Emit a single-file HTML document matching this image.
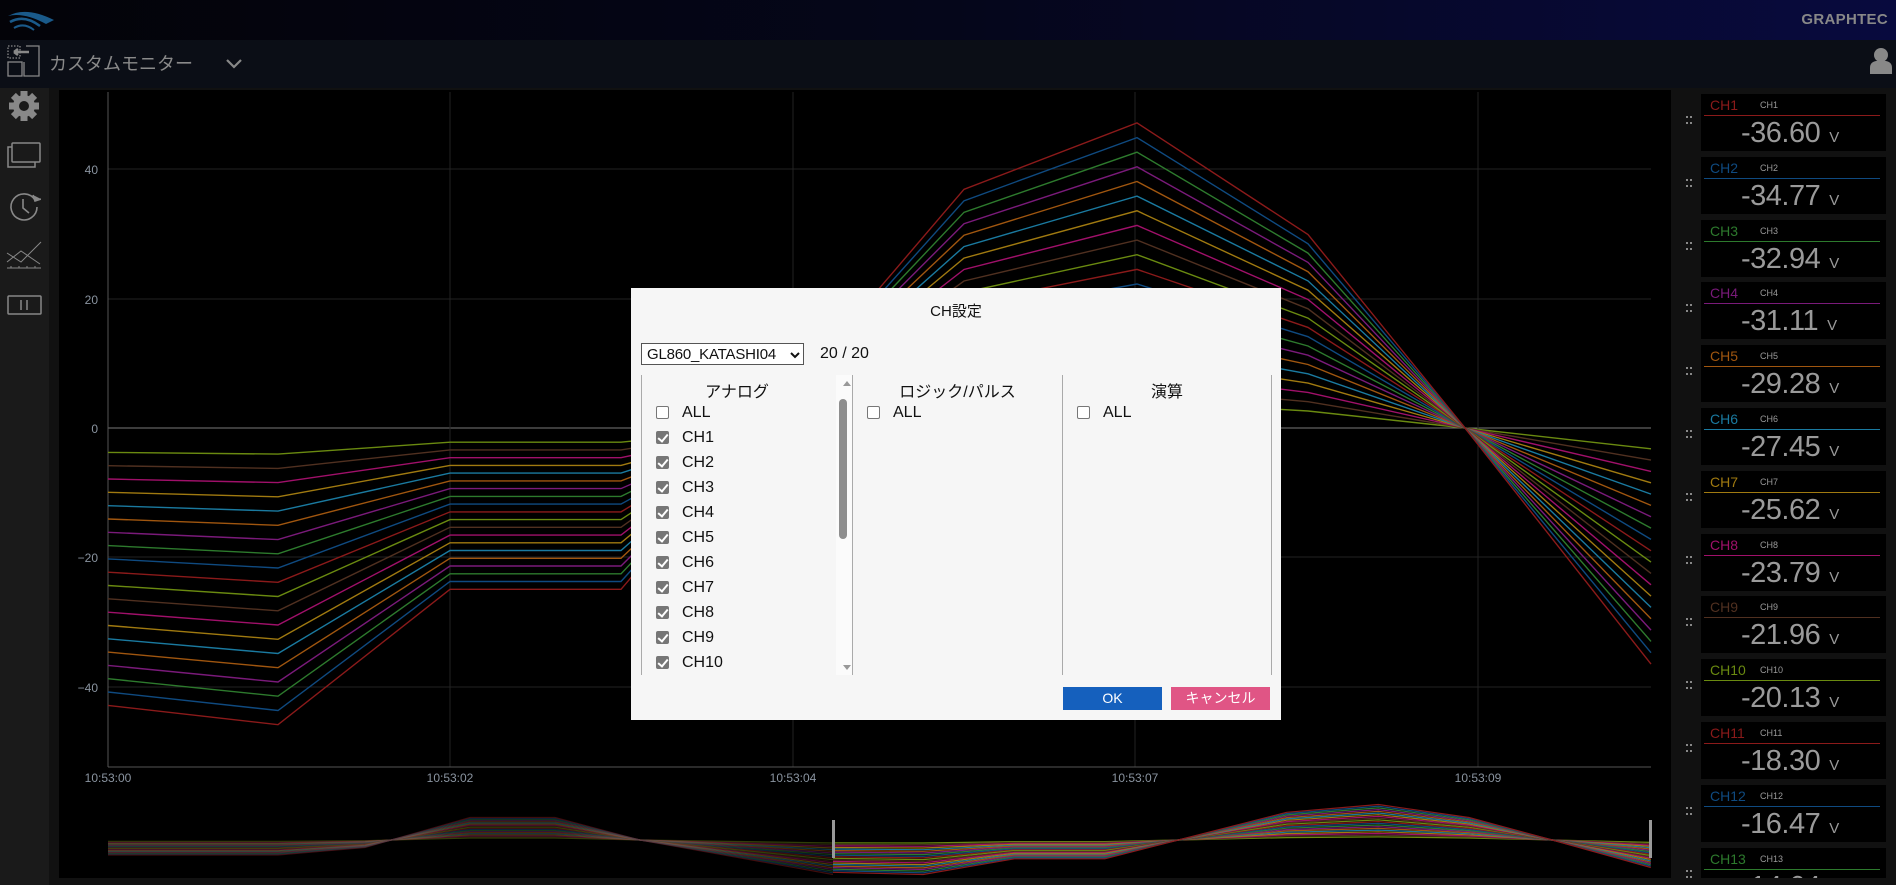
<!DOCTYPE html>
<html style="overflow:hidden;width:1896px;height:885px"><head><meta charset="utf-8"><style>
*{margin:0;padding:0;box-sizing:border-box}
body{width:1896px;height:885px;overflow:hidden;background:#111;font-family:"Liberation Sans","Noto Sans CJK JP",sans-serif;position:relative}
.top{position:absolute;left:0;top:0;width:1896px;height:40px;background:linear-gradient(90deg,#030308 0%,#05061a 50%,#080a3e 100%)}
.bar2{position:absolute;left:0;top:40px;width:1896px;height:48px;background:#0b0e16}
.side{position:absolute;left:0;top:88px;width:49px;height:797px;background:#1a1a1a}
.chart{position:absolute;left:59px;top:90px;width:1612px;height:788px;background:#000}
.rp{position:absolute;left:1671px;top:88px;width:225px;height:797px;background:#111}
#cards{position:absolute;left:0;top:0;width:1896px;height:878px;overflow:hidden}
.card{position:absolute;left:1701px;width:185px;height:57px;background:#000}
.card .n{position:absolute;left:9px;top:3px;font-size:14px}
.card .s{position:absolute;left:59px;top:6px;font-size:9px;color:#999}
.card .u{position:absolute;left:3px;right:6px;top:21px;height:1px}
.card .v{position:absolute;left:40px;top:23px;font-size:29px;color:#9a9a9a;letter-spacing:-0.5px}
.card .v small{font-size:15px;margin-left:9px}
.dots{position:absolute;left:1686px;width:6px;height:8px;border-top:2px dotted #888;border-bottom:2px dotted #888}
.dlg{position:absolute;left:631px;top:288px;width:650px;height:432px;background:#f6f6f6;color:#111}
.dlg .t{position:absolute;top:12px;width:100%;text-align:center;font-size:15px}
.sel{position:absolute;left:10px;top:55px;width:163px;height:22px;border:1px solid #555;background:#fff;font-size:15px;padding:2px 0 0 5px;letter-spacing:-0.2px}
.col{position:absolute;top:87px;height:300px;border-left:1px solid #aaa}
.hdr{position:absolute;top:3px;font-size:16px;width:100%;text-align:center}
.row{position:absolute;left:14px;font-size:16px;height:20px;line-height:20px}
.cb{display:inline-block;width:13px;height:13px;border:1px solid #777;border-radius:2px;background:#fff;vertical-align:-2px;margin-right:13px}
.cb.on{background:#767676;border-color:#767676;position:relative}
.cb.on:after{content:"";position:absolute;left:3px;top:0px;width:4px;height:8px;border:solid #fff;border-width:0 2px 2px 0;transform:rotate(40deg)}
.btn{position:absolute;top:399px;width:99px;height:23px;color:#fff;font-size:14px;text-align:center;line-height:23px}
</style></head><body>
<div class="top">
<svg width="60" height="40" style="position:absolute;left:6px;top:6px"><path d="M2 10 Q20 0 48 14 L40 18 Q18 6 2 10Z" fill="#1a5a8a"/><path d="M4 16 Q18 8 34 20" stroke="#1a5a8a" stroke-width="2.5" fill="none"/><path d="M8 22 Q18 16 28 24" stroke="#1a5a8a" stroke-width="2" fill="none"/></svg>
<div style="position:absolute;right:8px;top:11px;font-size:15px;font-weight:bold;color:#888;letter-spacing:0.3px">GRAPHTEC</div>
</div>
<div class="bar2">
<svg width="34" height="32" style="position:absolute;left:7px;top:5px" fill="none" stroke="#888" stroke-width="1.3"><rect x="1" y="1" width="12" height="12" stroke-dasharray="1.5 1.5"/><rect x="1" y="17" width="14" height="14"/><path d="M19 1H32V31H17V17"/><path d="M7 7H22M7 7l4-3M7 7l4 3" stroke-width="2.5"/></svg>
<div style="position:absolute;left:49px;top:10px;font-size:18px;color:#8a8a8a">カスタムモニター</div>
<svg width="20" height="14" style="position:absolute;left:224px;top:16px"><path d="M3 4l7 7 7-7" stroke="#888" stroke-width="2.2" fill="none"/></svg>
<svg width="24" height="28" style="position:absolute;left:1869px;top:7px" fill="#888"><circle cx="12" cy="8" r="7"/><path d="M1 27v-6q0-6 6-7h10q6 1 6 7v6z"/></svg>
</div>
<div class="side">
<svg width="34" height="34" style="position:absolute;left:7px;top:1px" fill="#888"><g transform="translate(17 17)"><circle r="11"/><g id="tt"><rect x="-3.5" y="-15" width="7" height="6"/></g><use href="#tt" transform="rotate(45)"/><use href="#tt" transform="rotate(90)"/><use href="#tt" transform="rotate(135)"/><use href="#tt" transform="rotate(180)"/><use href="#tt" transform="rotate(225)"/><use href="#tt" transform="rotate(270)"/><use href="#tt" transform="rotate(315)"/><circle r="5" fill="#1a1a1a"/></g></svg>
<svg width="36" height="28" style="position:absolute;left:6px;top:54px" fill="none" stroke="#888" stroke-width="1.5"><rect x="6" y="1" width="28" height="19" rx="1"/><path d="M6 5H2V25H29V20"/></svg>
<svg width="34" height="34" style="position:absolute;left:7px;top:102px" fill="none" stroke="#888" stroke-width="1.6"><path d="M28 10A13 13 0 1 0 30 17"/><path d="M26 5l2 6 6-2" fill="#888"/><path d="M16 9v9l6 5"/></svg>
<svg width="36" height="30" style="position:absolute;left:6px;top:152px" fill="none" stroke="#888" stroke-width="1"><path d="M1 13l14 9 20-20M1 22L15 11l19 13M1 28H35M5 26v2M13 26v2M21 26v2M29 26v2"/></svg>
<svg width="36" height="22" style="position:absolute;left:6px;top:206px" fill="none" stroke="#888" stroke-width="1.5"><rect x="2" y="2" width="33" height="18" rx="1"/><path d="M15 6v10M21 6v10"/></svg>
</div>
<div class="chart"></div>
<svg id="ch" width="1896" height="885" style="position:absolute;left:0;top:0"></svg>
<div class="rp"></div>
<div id="cards"></div>
<div class="dlg">
<div class="t">CH設定</div>
<div class="sel">GL860_KATASHI04<svg width="10" height="8" style="position:absolute;right:3px;top:8px"><path d="M1 1l4 4 4-4" stroke="#111" stroke-width="2" fill="none"/></svg></div>
<div style="position:absolute;left:189px;top:57px;font-size:16px">20 / 20</div>
<div class="col" style="left:10px;width:211px">
<div class="hdr" style="width:190px">アナログ</div>
<div style="position:absolute;left:194px;top:0;width:17px;height:300px;background:#fbfbfb"></div>
<div style="position:absolute;left:201px;top:6px;border:4px solid transparent;border-bottom:5px solid #999;border-top:0"></div>
<div style="position:absolute;left:197px;top:24px;width:8px;height:140px;background:#8e8e8e;border-radius:4px"></div>
<div style="position:absolute;left:201px;top:290px;border:4px solid transparent;border-top:5px solid #999;border-bottom:0"></div>
<div id="alist"></div>
</div>
<div class="col" style="left:221px;width:210px"><div class="hdr">ロジック/パルス</div><div class="row" style="top:28px"><span class="cb"></span>ALL</div></div>
<div class="col" style="left:431px;width:210px;border-right:1px solid #aaa"><div class="hdr">演算</div><div class="row" style="top:28px"><span class="cb"></span>ALL</div></div>
<div class="btn" style="left:432px;background:#1560bd">OK</div>
<div class="btn" style="left:540px;background:#e05585">キャンセル</div>
</div>
<script>
var cols=["#8b1a1a","#0f4a80","#2d7a2d","#7a1a7a","#a0560f","#1a7aa0","#a07a10","#a0106a","#503020","#6a8a10"];
var s='';
var gx=[108,450,793,1135,1478],gy=[169,299,428,557,687],lab=["40","20","0","\u221220","\u221240"],tl=["10:53:00","10:53:02","10:53:04","10:53:07","10:53:09"];
gy.forEach(function(y,i){s+='<line x1="108" y1="'+y+'" x2="1651" y2="'+y+'" stroke="'+(i==2?'#777':'#222')+'"/>';s+='<text x="98" y="'+(y+5)+'" fill="#8a94a0" font-size="12" text-anchor="end">'+lab[i]+'</text>';});
gx.forEach(function(x,i){s+='<line x1="'+x+'" y1="92" x2="'+x+'" y2="767" stroke="#222"/>';s+='<text x="'+x+'" y="782" fill="#8a94a0" font-size="12" text-anchor="middle">'+tl[i]+'</text>';});
s+='<line x1="108" y1="92" x2="108" y2="767" stroke="#555"/><line x1="108" y1="767" x2="1651" y2="767" stroke="#555"/>';
var X=[108,278,450,621,793,964,1137,1308,1465,1651],A=[-43,-46,-25,-25,6,37,47.3,30,0,-36.6];
for(var i=20;i>=1;i--){var k=(21-i)/20*0.96+0.04,p=[],q=[];
for(var j=0;j<X.length;j++){p.push(X[j]+','+(428-A[j]*k*6.45).toFixed(1));q.push((833+(X[j]-108)*0.53).toFixed(1)+','+(840-A[j]*k*0.75).toFixed(1));}
var c=cols[(i-1)%10];
s+='<polyline points="'+p.join(' ')+'" fill="none" stroke="'+c+'" stroke-width="1.4"/>';
s+='<polyline points="'+q.join(' ')+'" fill="none" stroke="'+c+'" stroke-width="1.2"/>';
var OX=[108,278,365,470,555,640,833],OA=[-20,-20,-10,30,30,0,-46],r=[];
for(j=0;j<OX.length;j++)r.push(OX[j]+','+(840-OA[j]*k*0.75).toFixed(1));
s+='<polyline points="'+r.join(' ')+'" fill="none" stroke="'+c+'" stroke-width="1.2" opacity="0.45"/>';}
s+='<rect x="832" y="820" width="3" height="38" fill="#999"/><rect x="1649" y="820" width="3" height="38" fill="#999"/>';
document.getElementById('ch').innerHTML=s;
var v=["-36.60","-34.77","-32.94","-31.11","-29.28","-27.45","-25.62","-23.79","-21.96","-20.13","-18.30","-16.47","-14.64"],h='';
for(i=0;i<13;i++){var t=94+i*62.8,c=cols[i%10];
h+='<div class="card" style="top:'+t+'px"><div class="n" style="color:'+c+'">CH'+(i+1)+'</div><div class="s">CH'+(i+1)+'</div><div class="u" style="background:'+c+'"></div><div class="v">'+v[i]+'<small>V</small></div></div>';
h+='<div class="dots" style="top:'+(t+22)+'px"></div>';}
document.getElementById('cards').innerHTML=h;
var a='<div class="row" style="top:28px"><span class="cb"></span>ALL</div>';
for(i=1;i<=10;i++)a+='<div class="row" style="top:'+(28+i*25)+'px"><span class="cb on"></span>CH'+i+'</div>';
document.getElementById('alist').innerHTML=a;
</script>
</body></html>
